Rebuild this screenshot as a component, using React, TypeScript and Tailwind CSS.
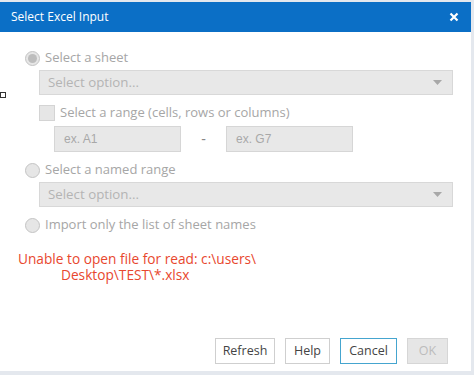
import React from 'react';

const Radio: React.FC<{ checked?: boolean }> = ({ checked }) => (
  <span className="w-[15px] h-[15px] rounded-full border border-[#c4c4c4] bg-[#e6e6e6] flex items-center justify-center shrink-0">
    {checked && <span className="w-[9px] h-[9px] rounded-full bg-[#bdbdbd]" />}
  </span>
);

const SelectBox: React.FC = () => (
  <div className="h-[25px] bg-[#e8e8e8] border border-[#d8d8d8] flex items-center justify-between pl-[8px] pr-[10px]">
    <span className="text-[13.3px] text-[#b4b4b4]">Select option...</span>
    <svg width="9" height="5" viewBox="0 0 9 5"><path d="M0 0h9L4.5 5z" fill="#a8a8a8" /></svg>
  </div>
);

const App: React.FC = () => {
  return (
    <div className="w-[474px] h-[375px] bg-[#e4e8ee] pt-[2px] pr-[3px] pb-[4px] overflow-hidden" style={{ fontFamily: '"Open Sans", "Noto Sans", sans-serif' }}>
      <div className="h-full bg-white flex flex-col relative">
        {/* Title bar */}
        <div className="h-[30px] bg-[#0b6fc6] flex items-center justify-between pl-[11px] pr-[12px] shrink-0">
          <span className="text-white text-[12px]">Select Excel Input</span>
          <svg width="10" height="10" viewBox="0 0 10 10"><path d="M1.5 1.5l7 7M8.5 1.5l-7 7" stroke="#fff" strokeWidth="2.2" /></svg>
        </div>

        {/* stray marker on left edge */}
        <span className="absolute left-0 top-[90px] w-[6px] h-[6px] border border-[#333]" />

        {/* Body */}
        <div className="flex-1 flex flex-col pl-[25px] pr-[18px] pt-[17px] text-[#a6a6a6]">
          <div className="flex items-center gap-[5px] h-[18px]">
            <Radio checked />
            <span className="text-[13px]">Select a sheet</span>
          </div>
          <div className="ml-[14px] mt-[3px]">
            <SelectBox />
          </div>
          <div className="ml-[14px] mt-[9px] flex items-center gap-[5px] h-[18px]">
            <span className="w-[16px] h-[16px] bg-[#e6e6e6] border border-[#d4d4d4] shrink-0" />
            <span className="text-[13px]">Select a range (cells, rows or columns)</span>
          </div>
          <div className="ml-[29px] mt-[4px] flex items-center" style={{ fontFamily: '"Liberation Sans", Arial, sans-serif' }}>
            <div className="w-[127px] h-[26px] bg-[#e8e8e8] border border-[#d6d6d6] flex items-center pl-[9px] text-[12px] text-[#a8a8a8]">ex. A1</div>
            <span className="w-[45px] text-center text-[14px] text-[#888]">-</span>
            <div className="w-[127px] h-[26px] bg-[#e8e8e8] border border-[#d6d6d6] flex items-center pl-[9px] text-[12px] text-[#a8a8a8]">ex. G7</div>
          </div>
          <div className="flex items-center gap-[5px] h-[18px] mt-[9px]">
            <Radio />
            <span className="text-[13px]">Select a named range</span>
          </div>
          <div className="ml-[14px] mt-[3px]">
            <SelectBox />
          </div>
          <div className="flex items-center gap-[5px] h-[18px] mt-[9px]">
            <Radio />
            <span className="text-[13px]">Import only the list of sheet names</span>
          </div>
          <div className="-ml-[7px] mt-[17px] text-[13.7px] leading-[16px] text-[#e8472e]">
            <div>Unable to open file for read: c:\users\</div>
            <div className="pl-[43px]">Desktop\TEST\*.xlsx</div>
          </div>
        </div>

        {/* Footer buttons */}
        <div className="flex justify-end gap-[10px] pr-[23px] pb-[7px] shrink-0 text-[12.5px] text-[#444]">
          <button className="h-[26px] w-[60px] border border-[#cfcfcf] bg-white">Refresh</button>
          <button className="h-[26px] w-[45px] border border-[#cfcfcf] bg-white">Help</button>
          <button className="h-[26px] w-[57px] border border-[#45a5cf] bg-white">Cancel</button>
          <button className="h-[26px] w-[41px] border border-[#d6d6d6] bg-[#e6e6e6] text-[#bcbcbc]">OK</button>
        </div>
      </div>
    </div>
  );
};

export default App;
